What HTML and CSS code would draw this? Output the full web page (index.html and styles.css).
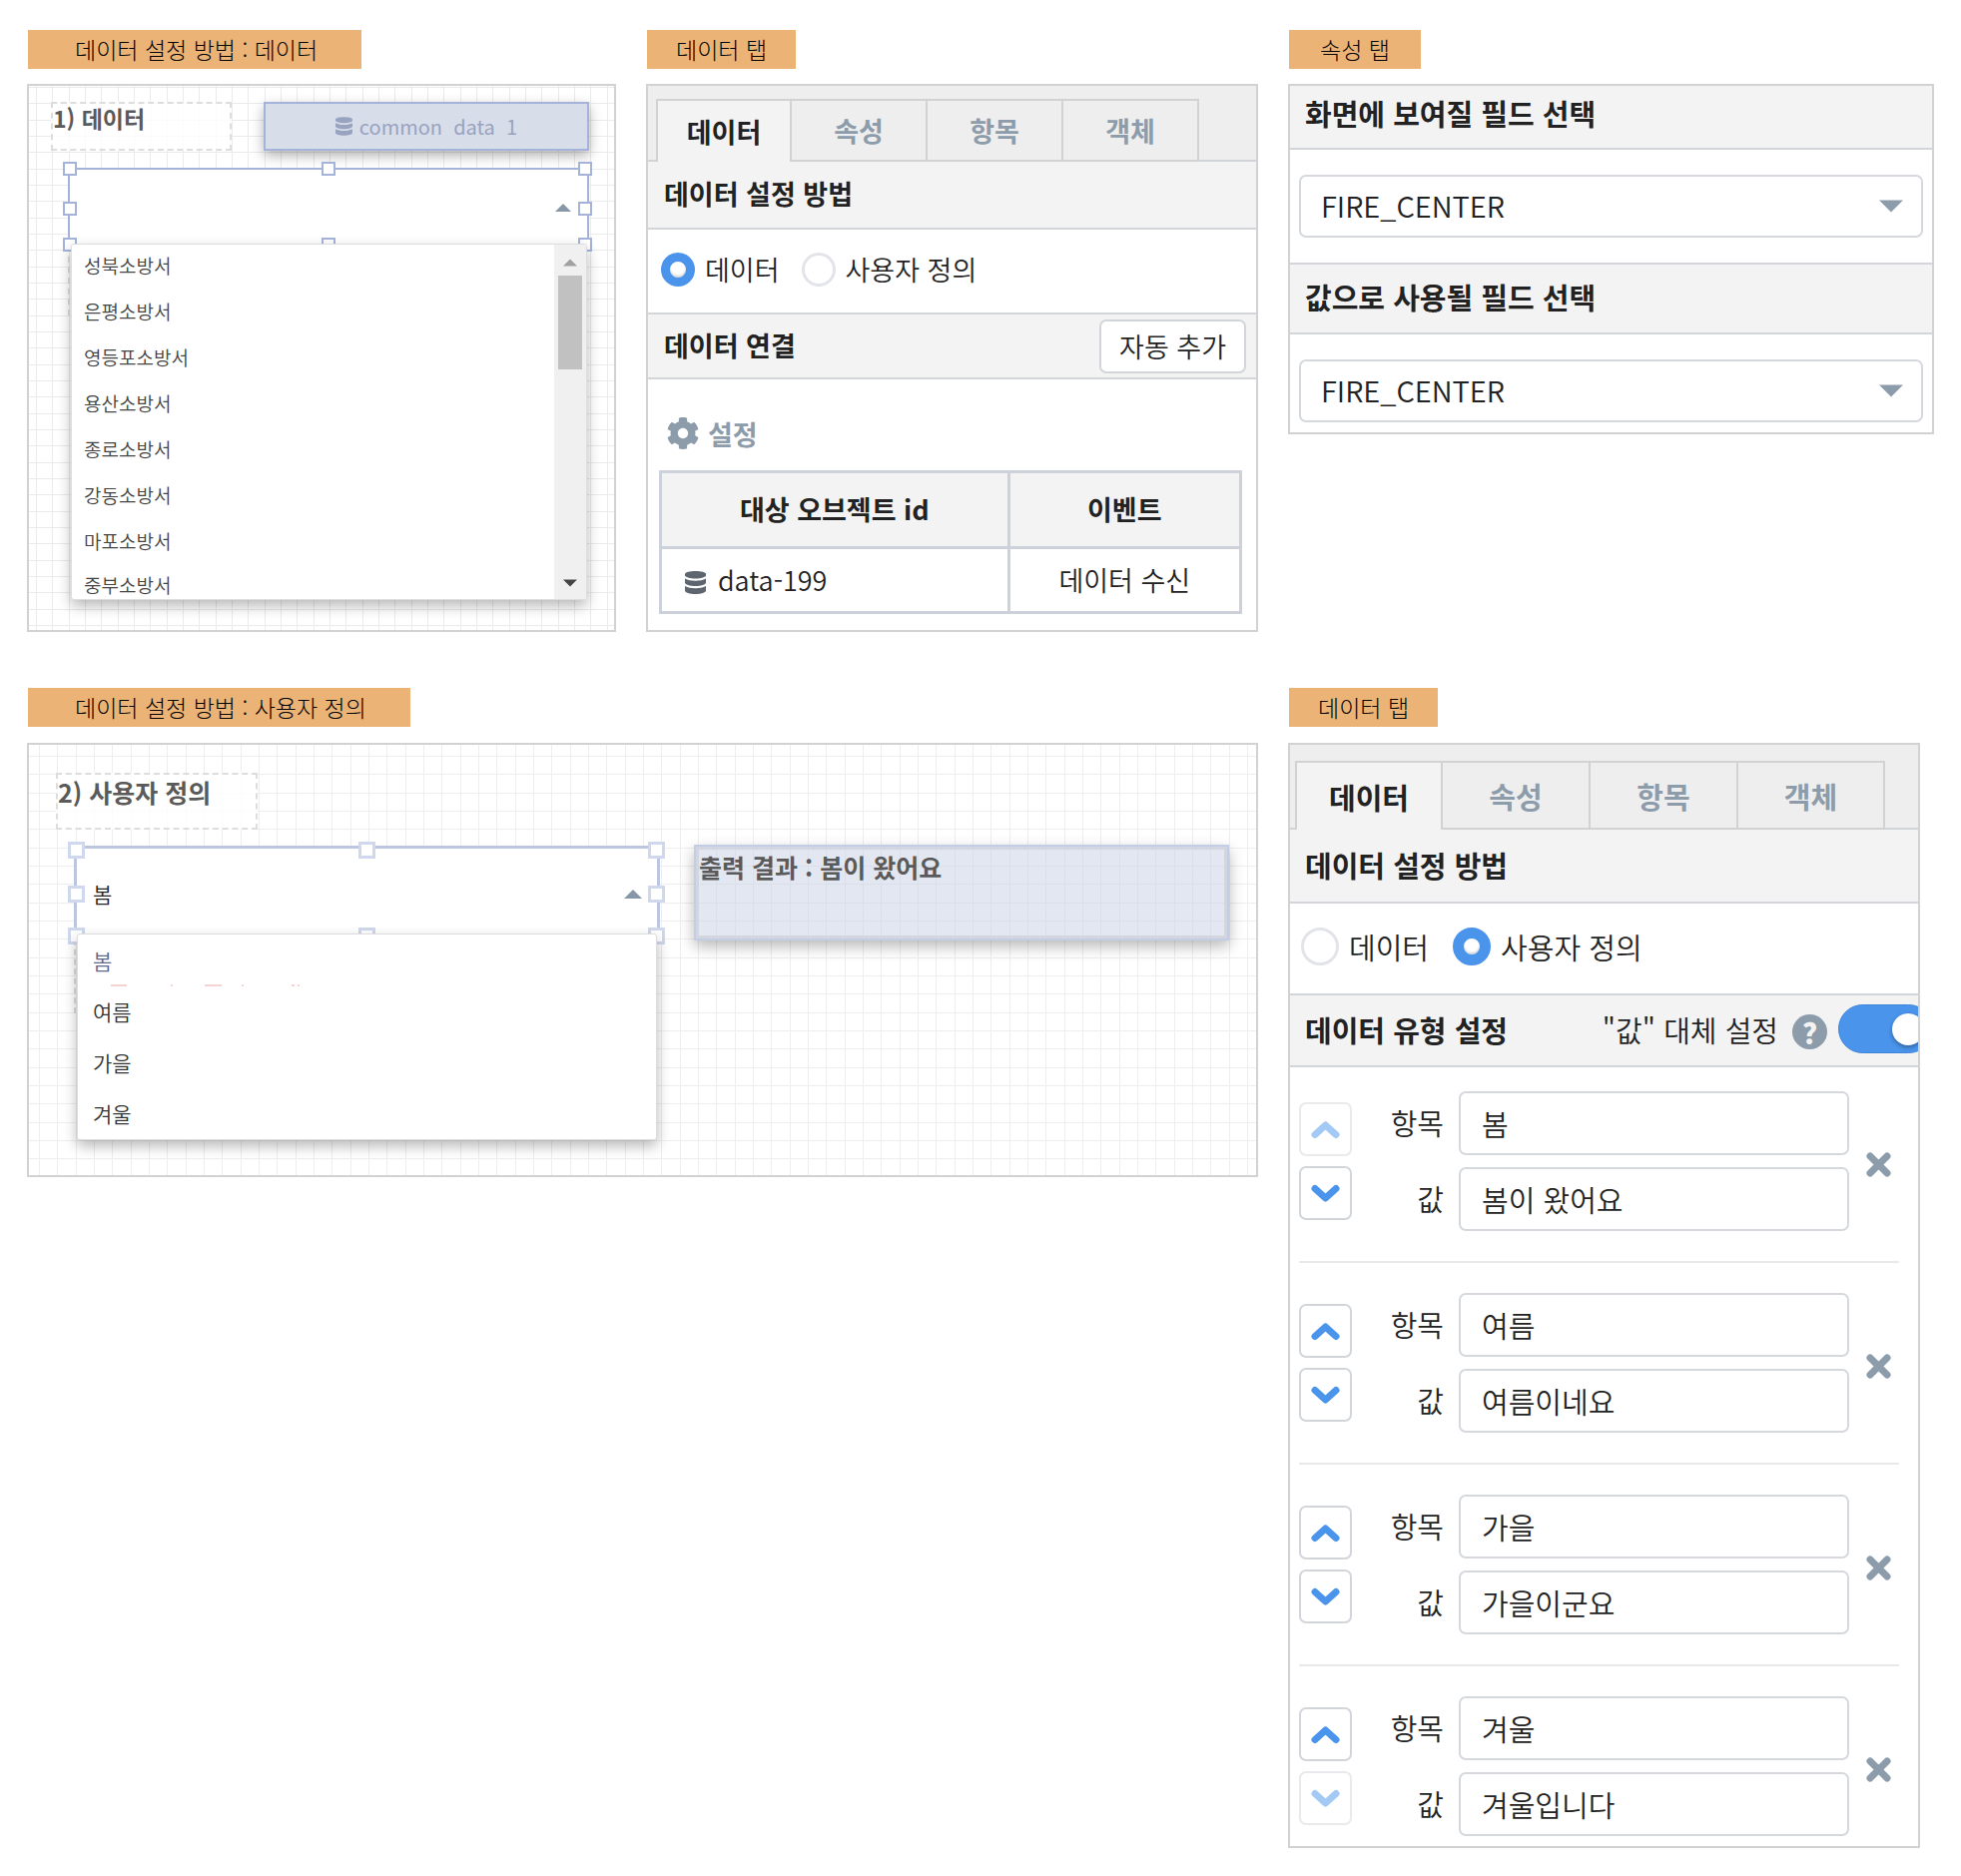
FILE: index.html
```html
<!DOCTYPE html>
<html lang="ko">
<head>
<meta charset="utf-8">
<meta name="viewport" content="width=device-width, initial-scale=1">
<title>데이터 설정 방법</title>
<link rel="stylesheet" href="styles.css">
</head>
<body>
<svg class="sprite" aria-hidden="true">
  <symbol id="i-db" viewBox="0 0 21 23">
    <path d="M0 3C0 1 5 0 10.500 0S21 1 21 3v1.500C21 6 16 7.500 10.500 7.500S0 6 0 4.500z"/>
    <path d="M0 7.500c3 1.500 6 2.200 10.500 2.200S18 9 21 7.500v4c0 2-5 3.500-10.500 3.500S0 13.500 0 11.500z"/>
    <path d="M0 15c3 1.500 6 2.200 10.500 2.200S18 16.500 21 15v4.500c0 2-5 3.500-10.500 3.500S0 21.500 0 19.500z"/>
  </symbol>
  <symbol id="i-cog" viewBox="8 8 496 496">
    <path d="M487.4 315.700l-42.600-24.600c4.300-23.200 4.300-47 0-70.200l42.600-24.600c4.900-2.800 7.100-8.600 5.500-14-11.100-35.600-30-67.800-54.700-94.600-3.800-4.100-10-5.100-14.800-2.300L380.800 110c-17.900-15.400-38.500-27.300-60.800-35.100V25.800c0-5.600-3.900-10.500-9.400-11.700-36.700-8.200-74.300-7.800-109.200 0-5.500 1.200-9.400 6.100-9.400 11.700V75c-22.200 7.900-42.800 19.800-60.800 35.100L88.700 85.500c-4.900-2.800-11-1.900-14.800 2.300-24.700 26.700-43.600 58.900-54.700 94.600-1.700 5.400.6 11.200 5.500 14L67.300 221c-4.300 23.200-4.300 47 0 70.200l-42.600 24.600c-4.900 2.800-7.100 8.600-5.500 14 11.100 35.600 30 67.800 54.700 94.600 3.800 4.100 10 5.100 14.800 2.300l42.600-24.600c17.900 15.400 38.500 27.300 60.800 35.100v49.200c0 5.600 3.900 10.500 9.400 11.700 36.700 8.200 74.300 7.800 109.200 0 5.500-1.200 9.400-6.100 9.400-11.700v-49.200c22.200-7.900 42.800-19.800 60.800-35.100l42.600 24.600c4.900 2.800 11 1.900 14.800-2.300 24.700-26.700 43.600-58.900 54.700-94.600 1.500-5.500-.7-11.300-5.600-14.100zM256 336c-44.100 0-80-35.900-80-80s35.900-80 80-80 80 35.900 80 80-35.900 80-80 80z"/>
  </symbol>
  <symbol id="i-up" viewBox="0 0 29 19"><path d="M4 14.500 14.500 5 25 14.500" fill="none" stroke="currentColor" stroke-width="7" stroke-linecap="round" stroke-linejoin="round"/></symbol>
  <symbol id="i-down" viewBox="0 0 29 19"><path d="M4 4.500 14.500 14 25 4.500" fill="none" stroke="currentColor" stroke-width="7" stroke-linecap="round" stroke-linejoin="round"/></symbol>
  <symbol id="i-x" viewBox="0 0 25 25"><path d="M4 4l17 17M21 4 4 21" fill="none" stroke="currentColor" stroke-width="7" stroke-linecap="round"/></symbol>
  <symbol id="i-tri-up" viewBox="0 0 18 9"><path d="M9 0l9 9H0z"/></symbol>
  <symbol id="i-tri-down" viewBox="0 0 24 12"><path d="M0 0h24L12 12z"/></symbol>
</svg>

<main class="board">
  <section class="cell">
    <h2 class="tag tag-wide">데이터 설정 방법 : 데이터</h2>
    <div class="panel canvas canvas-a">
      <div class="node title-node">1) 데이터</div>
      <div class="node data-node"><svg class="db"><use href="#i-db"/></svg><span>common&nbsp; data&nbsp; 1</span></div>
      <div class="node trail"></div>
      <button class="node combo" type="button" aria-expanded="true" aria-label="소방서 선택"><span></span><svg class="caret"><use href="#i-tri-up"/></svg></button>
      <i class="h t l"></i><i class="h t c"></i><i class="h t r"></i>
      <i class="h m l"></i><i class="h m r"></i>
      <i class="h b l"></i><i class="h b c"></i><i class="h b r"></i>
      <div class="node drop">
        <ul class="options">
          <li>성북소방서</li><li>은평소방서</li><li>영등포소방서</li><li>용산소방서</li>
          <li>종로소방서</li><li>강동소방서</li><li>마포소방서</li><li>중부소방서</li>
        </ul>
        <div class="scroll">
          <svg class="arrow off"><use href="#i-tri-up"/></svg>
          <div class="thumb"></div>
          <svg class="arrow end"><use href="#i-tri-down"/></svg>
        </div>
      </div>
    </div>
  </section>

  <section class="cell">
    <h2 class="tag">데이터 탭</h2>
    <div class="panel form">
      <div class="tabs" role="tablist">
        <button type="button" role="tab" aria-selected="true">데이터</button>
        <button type="button" role="tab">속성</button>
        <button type="button" role="tab">항목</button>
        <button type="button" role="tab">객체</button>
      </div>
      <h3 class="bar after-tabs">데이터 설정 방법</h3>
      <div class="radios">
        <label><input type="radio" name="src-a" checked>데이터</label>
        <label><input type="radio" name="src-a">사용자 정의</label>
      </div>
      <div class="bar"><h3>데이터 연결</h3><button class="btn" type="button">자동 추가</button></div>
      <div class="link-body">
        <a class="settings" href="#settings"><svg class="cog"><use href="#i-cog"/></svg>설정</a>
        <table class="links">
          <thead><tr><th class="target">대상 오브젝트 id</th><th>이벤트</th></tr></thead>
          <tbody><tr><td class="object"><svg class="db"><use href="#i-db"/></svg>data-199</td><td>데이터 수신</td></tr></tbody>
        </table>
      </div>
    </div>
  </section>

  <section class="cell">
    <h2 class="tag tag-short">속성 탭</h2>
    <div class="panel form large">
      <h3 class="bar first"><label for="show">화면에 보여질 필드 선택</label></h3>
      <div class="pick">
        <select id="show"><option>FIRE_CENTER</option></select>
        <svg class="caret"><use href="#i-tri-down"/></svg>
      </div>
      <h3 class="bar"><label for="value">값으로 사용될 필드 선택</label></h3>
      <div class="pick last">
        <select id="value"><option>FIRE_CENTER</option></select>
        <svg class="caret"><use href="#i-tri-down"/></svg>
      </div>
    </div>
  </section>

  <section class="cell span lower">
    <h2 class="tag tag-wide">데이터 설정 방법 : 사용자 정의</h2>
    <div class="panel canvas canvas-b">
      <div class="node title-node">2) 사용자 정의</div>
      <div class="node trail"></div>
      <button class="node combo" type="button" aria-expanded="true"><span>봄</span><svg class="caret"><use href="#i-tri-up"/></svg></button>
      <i class="h t l"></i><i class="h t c"></i><i class="h t r"></i>
      <i class="h m l"></i><i class="h m r"></i>
      <i class="h b l"></i><i class="h b c"></i><i class="h b r"></i>
      <div class="node drop">
        <ul class="options"><li class="on">봄<svg class="marks" viewBox="0 0 190 2"><path d="M0 1h16M60 1h2M94 1h17M131 1h2M181 1h3M187 1h2"/></svg></li><li>여름</li><li>가을</li><li>겨울</li></ul>
      </div>
      <div class="node output"><div class="output-text">출력 결과 : 봄이 왔어요</div></div>
    </div>
  </section>

  <section class="cell narrow lower">
    <h2 class="tag">데이터 탭</h2>
    <div class="panel form large">
      <div class="tabs" role="tablist">
        <button type="button" role="tab" aria-selected="true">데이터</button>
        <button type="button" role="tab">속성</button>
        <button type="button" role="tab">항목</button>
        <button type="button" role="tab">객체</button>
      </div>
      <h3 class="bar after-tabs">데이터 설정 방법</h3>
      <div class="radios">
        <label><input type="radio" name="src-b">데이터</label>
        <label><input type="radio" name="src-b" checked>사용자 정의</label>
      </div>
      <div class="bar">
        <h3>데이터 유형 설정</h3>
        <div class="swap">
          <label for="swap">"값" 대체 설정</label>
          <button class="help" type="button">?</button>
          <input id="swap" class="toggle" type="checkbox" checked>
        </div>
      </div>
      <ul class="rows">
        <li>
          <div class="order"><button type="button" disabled aria-label="위로"><svg><use href="#i-up"/></svg></button><button type="button" aria-label="아래로"><svg><use href="#i-down"/></svg></button></div>
          <div class="fields"><label for="n1">항목</label><input id="n1" type="text" value="봄"><label for="v1">값</label><input id="v1" type="text" value="봄이 왔어요"></div>
          <button class="remove" type="button" aria-label="삭제"><svg><use href="#i-x"/></svg></button>
        </li>
        <li>
          <div class="order"><button type="button" aria-label="위로"><svg><use href="#i-up"/></svg></button><button type="button" aria-label="아래로"><svg><use href="#i-down"/></svg></button></div>
          <div class="fields"><label for="n2">항목</label><input id="n2" type="text" value="여름"><label for="v2">값</label><input id="v2" type="text" value="여름이네요"></div>
          <button class="remove" type="button" aria-label="삭제"><svg><use href="#i-x"/></svg></button>
        </li>
        <li>
          <div class="order"><button type="button" aria-label="위로"><svg><use href="#i-up"/></svg></button><button type="button" aria-label="아래로"><svg><use href="#i-down"/></svg></button></div>
          <div class="fields"><label for="n3">항목</label><input id="n3" type="text" value="가을"><label for="v3">값</label><input id="v3" type="text" value="가을이군요"></div>
          <button class="remove" type="button" aria-label="삭제"><svg><use href="#i-x"/></svg></button>
        </li>
        <li>
          <div class="order"><button type="button" aria-label="위로"><svg><use href="#i-up"/></svg></button><button type="button" disabled aria-label="아래로"><svg><use href="#i-down"/></svg></button></div>
          <div class="fields"><label for="n4">항목</label><input id="n4" type="text" value="겨울"><label for="v4">값</label><input id="v4" type="text" value="겨울입니다"></div>
          <button class="remove" type="button" aria-label="삭제"><svg><use href="#i-x"/></svg></button>
        </li>
      </ul>
    </div>
  </section>
</main>
</body>
</html>
```

FILE: styles.css
```css
* { box-sizing: border-box; }

body {
  margin: 0;
  background: #fff;
  color: #222;
  font-family: "Noto Sans CJK KR", "Noto Sans", sans-serif;
  font-weight: 350;
}

button, input, select { font: inherit; color: inherit; margin: 0; padding: 0; }
button { background: none; border: 0; }
h2, h3, ul { margin: 0; padding: 0; }
ul { list-style: none; }
svg { display: block; fill: currentColor; flex: none; }
.sprite { position: absolute; width: 0; height: 0; }

/* page grid */
.board {
  display: grid;
  grid-template-columns: 590fr 613fr 647fr;
  gap: 56px 30px;
  padding: 30px 27px 28px;
}
.cell { display: flex; flex-direction: column; min-width: 0; }
.span { grid-column: span 2; }
.narrow { margin-right: 14px; }

.tag {
  align-self: flex-start;
  margin: 0 0 15px 1px;
  padding: 0 29px;
  background: #ebb476;
  color: #000;
  font-size: 23px;
  font-weight: 300;
  line-height: 39px;
  text-align: center;
  white-space: nowrap;
}
.lower .tag { margin-bottom: 16px; }
.tag-wide { padding: 0 44px 0 47px; }
.tag-short { padding: 0 31px; }

.panel { border: 2px solid #d2d2d2; background: #fff; overflow: hidden; }

/* design canvases */
.canvas { position: relative; }
.canvas-a {
  flex: 1;
  background-image:
    linear-gradient(to right, #ebebeb 1px, transparent 1px 16px, #ebebeb 16px 17px, transparent 17px 33px, #ebebeb 33px 34px, transparent 34px),
    linear-gradient(to bottom, #ebebeb 1px, transparent 1px 16px, #ebebeb 16px 17px, transparent 17px 33px, #ebebeb 33px 34px, transparent 34px);
  background-size: 49px 49px;
  background-position: 7px 1px;
}
.canvas-b {
  height: 435px;
  background-image:
    linear-gradient(to right, #eee 1px, transparent 1px 18px, #eee 18px 19px, transparent 19px 37px, #eee 37px 38px, transparent 38px),
    linear-gradient(to bottom, #eee 1px, transparent 1px 18px, #eee 18px 19px, transparent 19px 37px, #eee 37px 38px, transparent 38px);
  background-size: 55px 55px;
  background-position: 10px 11px;
}
.node { position: absolute; }
.title-node {
  border: 2px dashed #ddd;
  background: rgba(255, 255, 255, .8);
  color: #5a5a5a;
  font-weight: 700;
  white-space: nowrap;
}
.canvas-a .title-node { left: 22px; top: 16px; width: 181px; height: 49px; font-size: 23px; line-height: 28px; }
.canvas-b .title-node { left: 27px; top: 28px; width: 202px; height: 57px; font-size: 25px; line-height: 34px; }

.data-node {
  left: 235px; top: 16px; width: 326px; height: 49px;
  display: flex; align-items: center; justify-content: center; gap: 7px;
  border: 2px solid #a5b3db;
  background: #d8ddea;
  box-shadow: 0 5px 12px rgba(0, 0, 0, .3);
  color: #98a3bf;
  font-size: 20px;
  font-weight: 400;
}
.data-node .db { width: 17px; height: 19px; }

.trail { border-left: 2px dashed #ddd; }
.canvas-a .trail { left: 39px; top: 160px; height: 70px; }
.canvas-b .trail { left: 45px; top: 195px; height: 74px; }

.combo {
  display: flex; align-items: center; justify-content: space-between;
  background: #fff;
  font-size: 21px;
}
.combo .caret { color: #8797a8; }
.canvas-a .combo { left: 39px; top: 82px; width: 522px; height: 80px; border: 2px solid #a5b3db; padding-right: 16px; }
.canvas-a .combo .caret { width: 16px; height: 8px; }
.canvas-b .combo { left: 45px; top: 101px; width: 587px; height: 94px; border: 3px solid #bcc6e0; padding: 2px 15px 0 16px; }
.canvas-b .combo .caret { width: 18px; height: 9px; }

/* resize handles of the selected widget */
.h { position: absolute; background: #fff; }
.canvas-a .h { width: 14px; height: 14px; border: 2px solid #a5b3db; }
.canvas-a .l { left: 34px; }
.canvas-a .c { left: 293px; }
.canvas-a .r { left: 550px; }
.canvas-a .t { top: 76px; }
.canvas-a .m { top: 116px; }
.canvas-a .b { top: 152px; }
.canvas-b .h { width: 17px; height: 17px; border: 3px solid #cfd8ec; }
.canvas-b .l { left: 39px; }
.canvas-b .c { left: 330px; }
.canvas-b .r { left: 620px; }
.canvas-b .t { top: 97px; }
.canvas-b .m { top: 141px; }
.canvas-b .b { top: 183px; }

.drop {
  display: flex;
  overflow: hidden;
  border: 1px solid #ddd;
  background: #fff;
  border-radius: 3px;
  box-shadow: 0 6px 14px rgba(0, 0, 0, .28);
  color: #444;
}
.options { flex: 1; }
.canvas-a .drop { left: 42px; top: 158px; width: 517px; height: 357px; }
.canvas-a .options { margin-top: -2px; padding-left: 12px; font-size: 19px; line-height: 46px; }
.canvas-a .options li:last-child { height: 42px; line-height: 42px; }
.canvas-b .drop { left: 48px; top: 189px; width: 581px; height: 207px; }
.canvas-b .options { padding: 1px 0 0 15px; font-size: 21px; line-height: 51px; color: #333; }
.options .on { position: relative; color: #5c678c; }
.marks { position: absolute; left: 18px; bottom: 0; width: 190px; height: 2px; stroke: #f3d3d3; stroke-width: 2; }

.scroll {
  display: flex; flex-direction: column; align-items: center;
  width: 32px; padding: 14px 0 12px;
  background: #f0f0f0;
}
.thumb { width: 24px; height: 94px; margin-top: 9px; background: #c1c1c1; }
.arrow { width: 14px; height: 8px; color: #444; }
.arrow.off { color: #a0a0a0; }
.arrow.end { margin-top: auto; }

.output {
  left: 666px; top: 100px; width: 536px; height: 96px;
  border: 2px solid #c3cee6;
  box-shadow: 0 6px 14px rgba(0, 0, 0, .28);
}
.output-text {
  height: 100%;
  border: 3px solid #d3d6de;
  background: rgba(203, 211, 232, .55);
  color: #5a5a5a;
  font-size: 25px;
  font-weight: 700;
  line-height: 34px;
}

/* property forms */
.form { font-size: 27px; }
.form.large { font-size: 29px; }

.tabs {
  display: flex;
  height: 76px;
  padding: 13px 0 0 8px;
  background: #eee;
  box-shadow: inset 0 -2px #d0d4d9;
}
.tabs button {
  width: 136px;
  border: 2px solid #d0d2d4;
  border-right: 0;
  color: #8c9cab;
  font-weight: 700;
}
.tabs button:first-child { width: 134px; }
.tabs button:last-child { width: 138px; border-right: 2px solid #d0d2d4; }
.tabs [aria-selected] { border-bottom: 0; background: #f3f3f3; color: #222; }
.large .tabs { height: 85px; padding: 16px 0 0 5px; }
.large .tabs button { width: 148px; }
.large .tabs button:first-child { width: 146px; }
.large .tabs button:last-child { width: 149px; }

.bar {
  display: flex; align-items: center; justify-content: space-between;
  height: 67px;
  padding: 0 10px 2px 16px;
  border: solid #d2d6db;
  border-width: 2px 0;
  background: #f3f3f3;
  font-size: inherit;
  font-weight: 700;
  white-space: nowrap;
}
.bar h3 { font-size: inherit; }
.bar.after-tabs { height: 68px; padding-bottom: 4px; border-top: 0; }
.large .bar { height: 74px; padding: 0 15px 3px; }
.large .bar.first { height: 64px; padding-bottom: 9px; border-top: 0; }
.large .pick + .bar { height: 72px; padding-bottom: 4px; }

.btn {
  height: 54px; margin-top: 2px; padding: 0 18px;
  border: 2px solid #d2d6db; border-radius: 7px;
  background: #fff;
  font-weight: 350;
}

.radios { display: flex; align-items: center; gap: 22px; height: 83px; padding: 0 0 4px 13px; }
.radios label { display: flex; align-items: center; gap: 10px; }
.large .radios { gap: 24px; height: 90px; padding-left: 11px; }
.radios input {
  appearance: none;
  width: 34px; height: 34px;
  border: 3px solid #e2e4e9; border-radius: 50%;
  background: #fff;
}
.radios input:checked {
  border: 9px solid #4a94ec;
  box-shadow: inset 0 -2px 2px rgba(0, 0, 0, .15);
}
.large .radios input { width: 38px; height: 38px; }
.large .radios input:checked { border-width: 11px; }

.link-body { padding: 35px 14px 16px 11px; }
.settings {
  display: inline-flex; align-items: center; gap: 9px;
  height: 38px; margin: 0 0 18px 8px;
  color: #8c9cab; font-weight: 700; text-decoration: none;
}
.cog { width: 32px; height: 32px; }
.links { width: 100%; border-collapse: collapse; table-layout: fixed; }
.links th, .links td { border: 3px solid #cdd1d9; padding: 0; text-align: center; line-height: 38px; }
.links th { height: 76px; padding-bottom: 2px; background: #f3f3f3; font-weight: 700; }
.links td { height: 65px; }
.links .target { width: 60%; }
.links .object { text-align: left; }
.object .db { display: inline-block; width: 21px; height: 23px; margin: 0 12px 0 23px; color: #5d666e; vertical-align: -3px; }

.pick { position: relative; padding: 25px 9px; }
.pick.last { padding-bottom: 10px; }
.pick select {
  appearance: none;
  display: block;
  width: 100%; height: 63px;
  padding: 0 60px 4px 20px;
  border: 2px solid #d5d9de; border-radius: 7px;
  background: #fff;
}
.pick .caret { position: absolute; right: 29px; top: 50px; width: 24px; height: 13px; color: #8c9cab; pointer-events: none; }

.swap { display: flex; align-items: center; margin-right: -30px; font-weight: 350; }
.help {
  width: 35px; height: 35px; margin: 6px 11px 0 14px;
  border-radius: 50%;
  background: #8c9cab; color: #f3f3f3;
  font-size: 29px; font-weight: 900; line-height: 35px;
}
.toggle {
  appearance: none;
  display: flex; align-items: center; justify-content: flex-end;
  width: 95px; height: 49px; padding-right: 8px;
  border: 1px solid #3f85d8; border-radius: 25px;
  background: #4a94ec;
}
.toggle::before {
  content: "";
  width: 32px; height: 32px;
  border-radius: 50%;
  background: #fff;
  box-shadow: 0 2px 4px rgba(0, 0, 0, .35);
}

.rows { padding: 24px 19px 10px 9px; }
.rows li { display: flex; align-items: center; }
.rows li + li { margin-top: 30px; padding-top: 30px; border-top: 2px solid #e8e9eb; }
.order { display: grid; gap: 10px; }
.order button {
  display: grid; place-items: center;
  width: 53px; height: 54px;
  border: 2px solid #d2d6db; border-radius: 7px;
  color: #4a94ec;
}
.order button:disabled { opacity: .5; }
.order svg { width: 29px; height: 19px; }
.fields {
  flex: 1;
  display: grid; grid-template-columns: 92px 1fr; gap: 12px 15px; align-items: center;
}
.fields label { padding-bottom: 2px; text-align: right; }
.fields input {
  width: 100%; min-width: 0; height: 64px;
  padding: 0 21px 1px;
  border: 2px solid #d5d9de; border-radius: 7px;
  background: #fff;
}
.remove { margin: 6px 8px 0 17px; color: #8c9cab; }
.remove svg { width: 25px; height: 25px; }
```
